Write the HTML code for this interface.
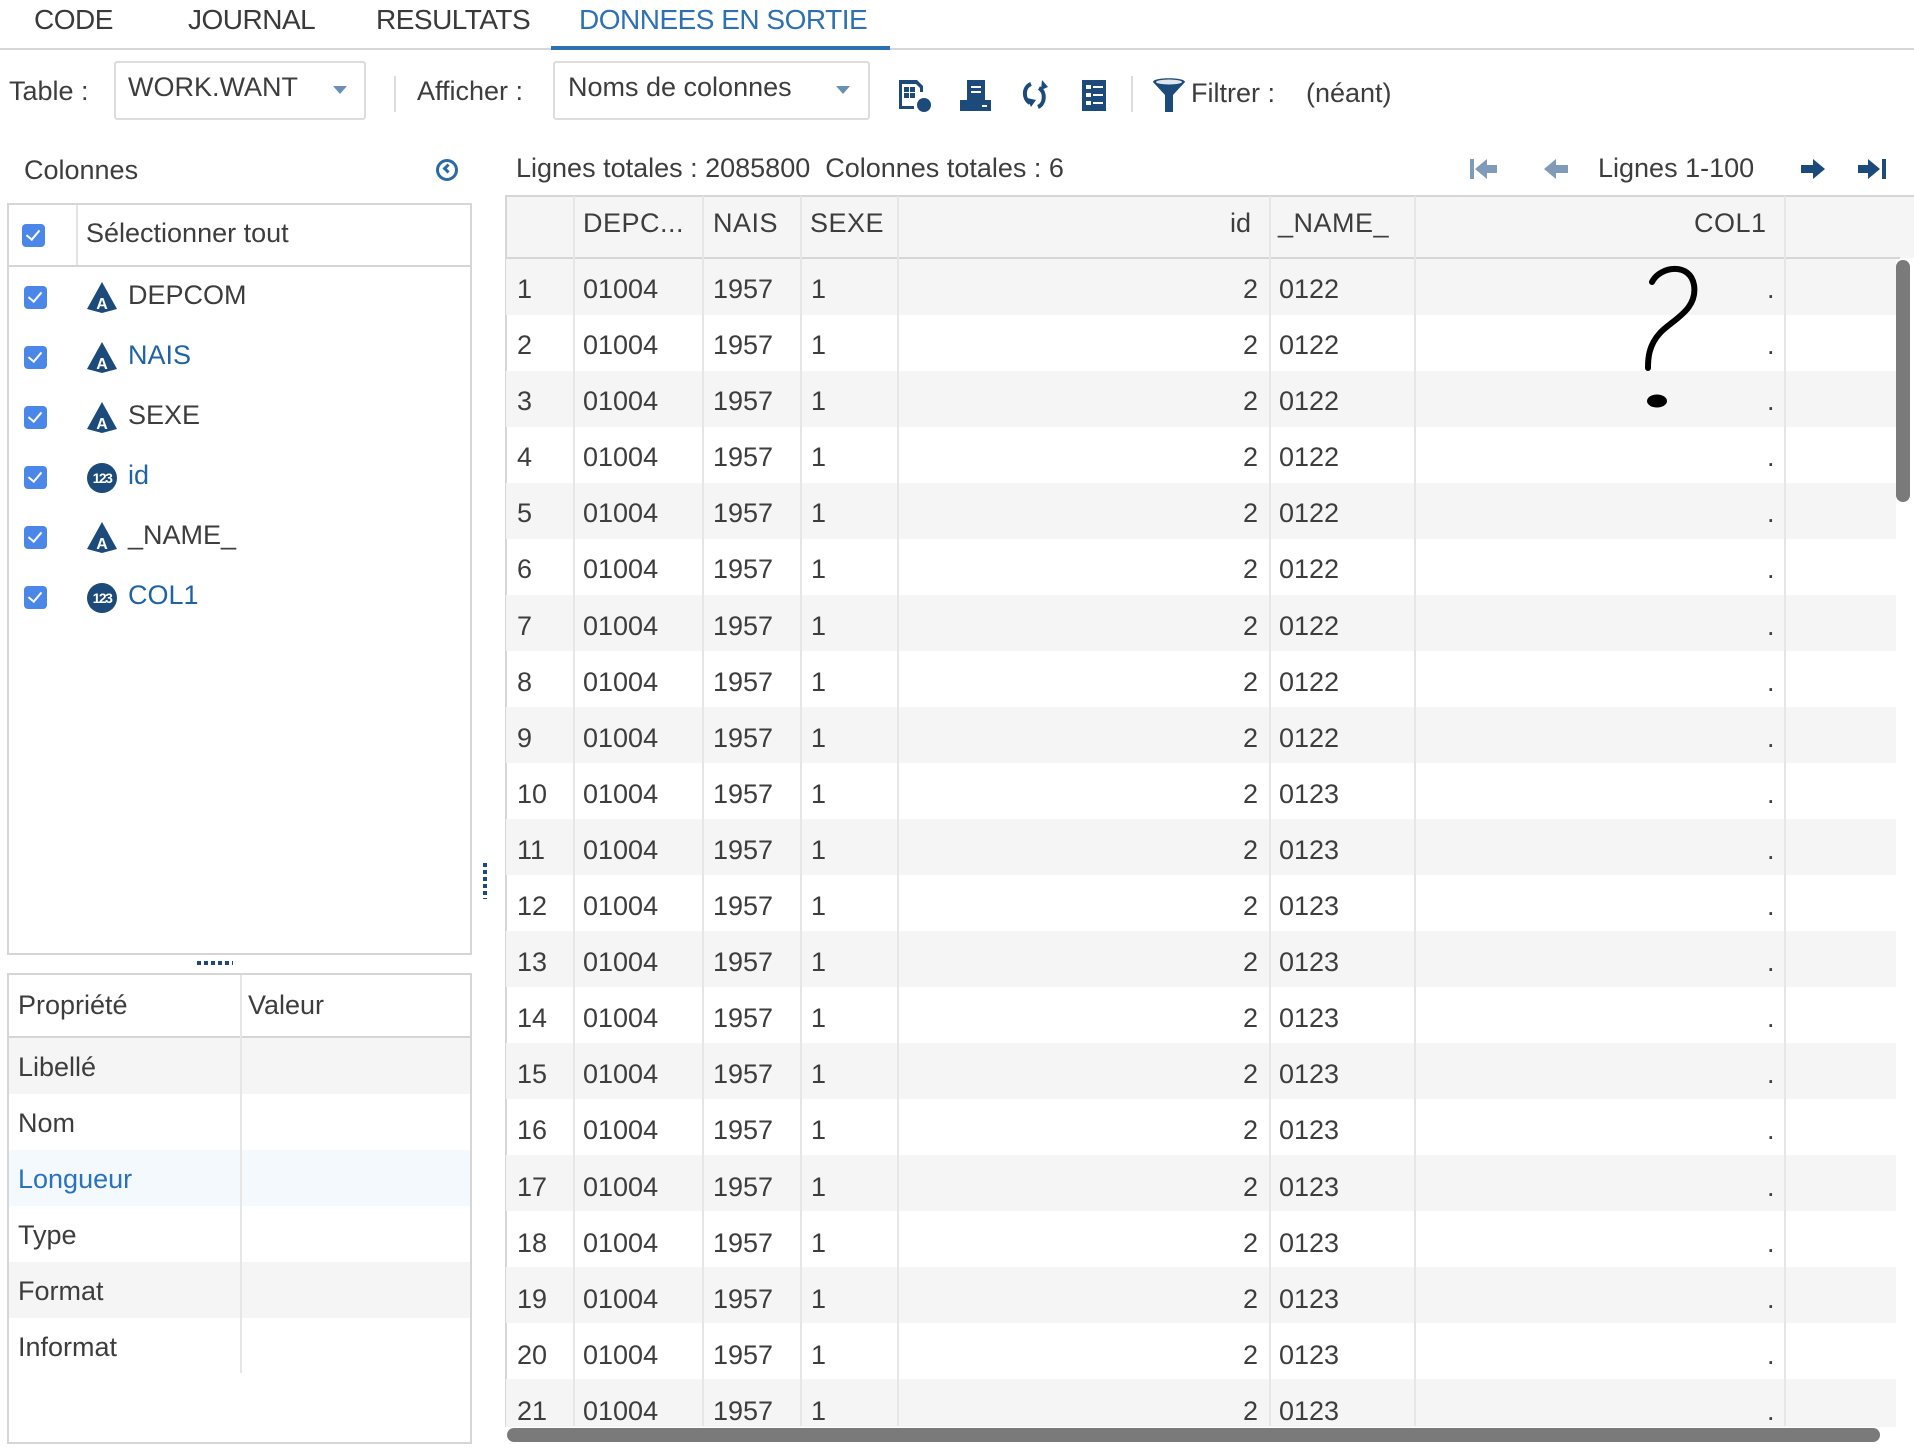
<!DOCTYPE html>
<html><head><meta charset="utf-8">
<style>
*{margin:0;padding:0;box-sizing:border-box}
body{width:1914px;height:1456px;background:#fff;position:relative;overflow:hidden;font-family:"Liberation Sans",sans-serif;color:#3d3d3d}
.a{position:absolute;white-space:nowrap}
.tab{font-size:28px;top:4px;color:#3a3a3a;letter-spacing:-0.5px}
.t27{font-size:27px}
.cb{position:absolute;width:23px;height:23px;background:#4a87e8;border-radius:4px}
.cb:after{content:"";position:absolute;left:7px;top:3px;width:6px;height:11px;border:solid #fff;border-width:0 2.5px 2.5px 0;transform:rotate(40deg)}
.blue{color:#1f63a6}
.row{position:absolute;left:506px;width:1390px;height:56px}
.g{background:#f5f5f5}
.vl{position:absolute;top:196px;width:2px;height:1230px;background:#e6e6e6}
</style></head><body>

<div class="a tab" style="left:34px">CODE</div>
<div class="a tab" style="left:188px">JOURNAL</div>
<div class="a tab" style="left:376px">RESULTATS</div>
<div class="a tab" style="left:579px;color:#2e70b4">DONNEES EN SORTIE</div>
<div class="a" style="left:0;top:48px;width:1914px;height:2px;background:#d6d6d6"></div>
<div class="a" style="left:551px;top:46px;width:339px;height:4px;background:#2e70b4"></div>

<div class="a t27" style="left:9px;top:76px">Table :</div>
<div class="a" style="left:114px;top:61px;width:252px;height:59px;border:2px solid #ddd;border-radius:3px"></div>
<div class="a t27" style="left:128px;top:72px">WORK.WANT</div>
<div class="a" style="left:333px;top:86px;width:0;height:0;border-left:7px solid transparent;border-right:7px solid transparent;border-top:8px solid #6a8fb5"></div>
<div class="a" style="left:394px;top:76px;width:2px;height:36px;background:#ddd"></div>
<div class="a t27" style="left:417px;top:76px">Afficher :</div>
<div class="a" style="left:553px;top:61px;width:317px;height:59px;border:2px solid #ddd;border-radius:3px"></div>
<div class="a t27" style="left:568px;top:72px">Noms de colonnes</div>
<div class="a" style="left:836px;top:86px;width:0;height:0;border-left:7px solid transparent;border-right:7px solid transparent;border-top:8px solid #6a8fb5"></div>
<svg class="a" style="left:896px;top:76px" width="240" height="40" viewBox="0 0 240 40">
 <g fill="#1c4a7a">
  <path d="M3 4h18l6 6v6h-3v-4l-4-4H6v22h12v3H3z"/>
  <rect x="8" y="11" width="5" height="5"/><rect x="14" y="11" width="5" height="5"/><rect x="8" y="17" width="5" height="5"/><rect x="14" y="17" width="5" height="5"/>
  <circle cx="28" cy="29" r="7"/>
  <rect x="71" y="4" width="18" height="20"/><rect x="64" y="24" width="31" height="11"/>
  <rect x="186" y="4" width="24" height="31"/>
 </g>
 <g fill="#fff"><rect x="75" y="10" width="10" height="2"/><rect x="75" y="15" width="10" height="2"/><rect x="86" y="29" width="5" height="2"/>
  <rect x="190" y="9" width="5" height="4"/><rect x="197" y="10" width="10" height="2"/>
  <rect x="190" y="17" width="5" height="4"/><rect x="197" y="18" width="10" height="2"/>
  <rect x="190" y="25" width="5" height="4"/><rect x="197" y="26" width="10" height="2"/></g>
 <path d="M135 8c-8 3-8 15-1 19M142 31c7-3 8-15 1-19" fill="none" stroke="#1c4a7a" stroke-width="4"/>
 <path d="M131 22l4 9 5-7zM146 4l6 7-7 3z" fill="#1c4a7a"/>
 <rect x="235" y="0" width="2" height="36" fill="#ddd"/>
</svg>
<svg class="a" style="left:1152px;top:78px" width="34" height="36" viewBox="0 0 34 36"><path d="M1 4c0-5 32-5 32 0l-12 13v17h-8V17z" fill="#1c4a7a"/><ellipse cx="17" cy="4" rx="13" ry="2.5" fill="#dfe6ee"/></svg>
<div class="a t27" style="left:1191px;top:78px">Filtrer :</div>
<div class="a t27" style="left:1306px;top:78px">(néant)</div>

<div class="a t27" style="left:24px;top:155px">Colonnes</div>
<div class="a" style="left:436px;top:159px;width:22px;height:22px;border:3px solid #2a6aa8;border-radius:50%"></div>
<div class="a" style="left:444px;top:165px;width:7px;height:7px;border:solid #2a6aa8;border-width:0 0 3px 3px;transform:rotate(45deg)"></div>
<div class="a" style="left:7px;top:203px;width:465px;height:752px;border:2px solid #d6d6d6"></div>
<div class="a" style="left:7px;top:265px;width:465px;height:2px;background:#d6d6d6"></div>
<div class="a" style="left:76px;top:205px;width:2px;height:60px;background:#e3e3e3"></div>
<div class="cb" style="left:22px;top:224px"></div>
<div class="a t27" style="left:86px;top:218px">Sélectionner tout</div>

<svg width="0" height="0" style="position:absolute"><defs>
<g id="ta"><path d="M15 0L30 27 15 31 0 27z" fill="#1c4a7a"/><text x="15" y="27" font-size="16" font-weight="bold" fill="#fff" text-anchor="middle" font-family="Liberation Sans">A</text></g>
<g id="tn"><circle cx="15" cy="15" r="15" fill="#1c4a7a"/><text x="15" y="20" font-size="14" font-weight="bold" fill="#fff" text-anchor="middle" font-family="Liberation Sans" letter-spacing="-1.5">123</text></g>
</defs></svg>

<div class="cb" style="left:24px;top:286px"></div><svg class="a" style="left:87px;top:282px" width="30" height="32"><use href="#ta"/></svg><div class="a t27" style="left:128px;top:280px">DEPCOM</div>
<div class="cb" style="left:24px;top:346px"></div><svg class="a" style="left:87px;top:342px" width="30" height="32"><use href="#ta"/></svg><div class="a t27 blue" style="left:128px;top:340px">NAIS</div>
<div class="cb" style="left:24px;top:406px"></div><svg class="a" style="left:87px;top:402px" width="30" height="32"><use href="#ta"/></svg><div class="a t27" style="left:128px;top:400px">SEXE</div>
<div class="cb" style="left:24px;top:466px"></div><svg class="a" style="left:87px;top:463px" width="30" height="32"><use href="#tn"/></svg><div class="a t27 blue" style="left:128px;top:460px">id</div>
<div class="cb" style="left:24px;top:526px"></div><svg class="a" style="left:87px;top:522px" width="30" height="32"><use href="#ta"/></svg><div class="a t27" style="left:128px;top:520px">_NAME_</div>
<div class="cb" style="left:24px;top:586px"></div><svg class="a" style="left:87px;top:583px" width="30" height="32"><use href="#tn"/></svg><div class="a t27 blue" style="left:128px;top:580px">COL1</div>

<div class="a" style="left:197px;top:961px;width:36px;height:4px;background-image:repeating-linear-gradient(90deg,#1c4a7a 0 4px,transparent 4px 7px)"></div>
<div class="a" style="left:483px;top:863px;width:4px;height:36px;background-image:repeating-linear-gradient(180deg,#1c4a7a 0 4px,transparent 4px 7px)"></div>

<div class="a" style="left:7px;top:973px;width:465px;height:471px;border:2px solid #d6d6d6"></div>
<div class="a" style="left:7px;top:1036px;width:465px;height:2px;background:#d6d6d6"></div>
<div class="a" style="left:9px;top:1038px;width:461px;height:56px;background:#f5f5f5"></div>
<div class="a" style="left:9px;top:1150px;width:461px;height:56px;background:#f4f9fe"></div>
<div class="a" style="left:9px;top:1262px;width:461px;height:56px;background:#f5f5f5"></div>
<div class="a" style="left:240px;top:975px;width:2px;height:398px;background:#e6e6e6"></div>
<div class="a t27" style="left:18px;top:990px">Propriété</div>
<div class="a t27" style="left:248px;top:990px">Valeur</div>
<div class="a t27" style="left:18px;top:1052px">Libellé</div>
<div class="a t27" style="left:18px;top:1108px">Nom</div>
<div class="a t27" style="left:18px;top:1164px;color:#2a72c0">Longueur</div>
<div class="a t27" style="left:18px;top:1220px">Type</div>
<div class="a t27" style="left:18px;top:1276px">Format</div>
<div class="a t27" style="left:18px;top:1332px">Informat</div>

<div class="a t27" style="left:516px;top:153px">Lignes totales : 2085800&nbsp;&nbsp;Colonnes totales : 6</div>
<svg class="a" style="left:1470px;top:156px" width="60" height="26"><rect x="0" y="3" width="4" height="20" fill="#7f9bb8"/><path d="M5 13l12-10v6h10v8H17v6z" fill="#7f9bb8"/></svg>
<svg class="a" style="left:1543px;top:156px" width="30" height="26"><path d="M1 13l12-10v6h12v8H13v6z" fill="#7f9bb8"/></svg>
<div class="a t27" style="left:1598px;top:153px">Lignes 1-100</div>
<svg class="a" style="left:1798px;top:156px" width="30" height="26"><path d="M27 13L15 3v6H3v8h12v6z" fill="#1c4a7a"/></svg>
<svg class="a" style="left:1857px;top:156px" width="32" height="26"><path d="M23 13L11 3v6H1v8h10v6z" fill="#1c4a7a"/><rect x="25" y="3" width="4" height="20" fill="#1c4a7a"/></svg>

<div class="a" style="left:505px;top:195px;width:1409px;height:1249px;border:2px solid #d6d6d6;border-right:none"></div>
<div class="a" style="left:507px;top:197px;width:1407px;height:61px;background:#f5f5f5"></div>
<div class="a" style="left:505px;top:257px;width:1395px;height:2px;background:#d6d6d6"></div>

<div class="row g" style="top:259px"></div>
<div class="row g" style="top:371px"></div>
<div class="row g" style="top:483px"></div>
<div class="row g" style="top:595px"></div>
<div class="row g" style="top:707px"></div>
<div class="row g" style="top:819px"></div>
<div class="row g" style="top:931px"></div>
<div class="row g" style="top:1043px"></div>
<div class="row g" style="top:1155px"></div>
<div class="row g" style="top:1267px"></div>
<div class="row g" style="top:1379px;height:48px"></div>

<div class="vl" style="left:573px"></div><div class="vl" style="left:702px"></div><div class="vl" style="left:800px"></div><div class="vl" style="left:897px"></div><div class="vl" style="left:1269px"></div><div class="vl" style="left:1414px"></div><div class="vl" style="left:1784px"></div>

<div class="a t27" style="left:583px;top:208px;letter-spacing:0.5px">DEPC...</div>
<div class="a t27" style="left:713px;top:208px;letter-spacing:0.5px">NAIS</div>
<div class="a t27" style="left:810px;top:208px;letter-spacing:0.5px">SEXE</div>
<div class="a t27" style="left:1230px;top:208px">id</div>
<div class="a t27" style="left:1278px;top:208px;letter-spacing:0.5px">_NAME_</div>
<div class="a t27" style="left:1694px;top:208px;letter-spacing:0.5px">COL1</div>

<div style="position:absolute;left:0;top:0">
<div class="a t27" style="left:517px;top:261px;line-height:56.1px">1<br>2<br>3<br>4<br>5<br>6<br>7<br>8<br>9<br>10<br>11<br>12<br>13<br>14<br>15<br>16<br>17<br>18<br>19<br>20<br>21</div>
<div class="a t27" style="left:583px;top:261px;line-height:56.1px">01004<br>01004<br>01004<br>01004<br>01004<br>01004<br>01004<br>01004<br>01004<br>01004<br>01004<br>01004<br>01004<br>01004<br>01004<br>01004<br>01004<br>01004<br>01004<br>01004<br>01004</div>
<div class="a t27" style="left:713px;top:261px;line-height:56.1px">1957<br>1957<br>1957<br>1957<br>1957<br>1957<br>1957<br>1957<br>1957<br>1957<br>1957<br>1957<br>1957<br>1957<br>1957<br>1957<br>1957<br>1957<br>1957<br>1957<br>1957</div>
<div class="a t27" style="left:811px;top:261px;line-height:56.1px">1<br>1<br>1<br>1<br>1<br>1<br>1<br>1<br>1<br>1<br>1<br>1<br>1<br>1<br>1<br>1<br>1<br>1<br>1<br>1<br>1</div>
<div class="a t27" style="left:1243px;top:261px;line-height:56.1px">2<br>2<br>2<br>2<br>2<br>2<br>2<br>2<br>2<br>2<br>2<br>2<br>2<br>2<br>2<br>2<br>2<br>2<br>2<br>2<br>2</div>
<div class="a t27" style="left:1279px;top:261px;line-height:56.1px">0122<br>0122<br>0122<br>0122<br>0122<br>0122<br>0122<br>0122<br>0122<br>0123<br>0123<br>0123<br>0123<br>0123<br>0123<br>0123<br>0123<br>0123<br>0123<br>0123<br>0123</div>
<div class="a t27" style="left:1767px;top:261px;line-height:56.1px">.<br>.<br>.<br>.<br>.<br>.<br>.<br>.<br>.<br>.<br>.<br>.<br>.<br>.<br>.<br>.<br>.<br>.<br>.<br>.<br>.</div>
</div>
<div class="a" style="left:505px;top:1427px;width:1409px;height:17px;background:#fff"></div>
<div class="a" style="left:507px;top:1428px;width:1373px;height:14px;background:#7a7a7a;border-radius:7px"></div>
<div class="a" style="left:1896px;top:260px;width:14px;height:242px;background:#7a7a7a;border-radius:7px"></div>

<svg class="a" style="left:0;top:0" width="1914" height="1456"><path d="M1652 282C1660 266 1690 262 1694 285C1698 310 1672 320 1660 333C1648 346 1648 360 1648 368" fill="none" stroke="#000" stroke-width="6" stroke-linecap="round"/><ellipse cx="1657" cy="401" rx="10" ry="6.5" fill="#000"/></svg>
</body></html>
